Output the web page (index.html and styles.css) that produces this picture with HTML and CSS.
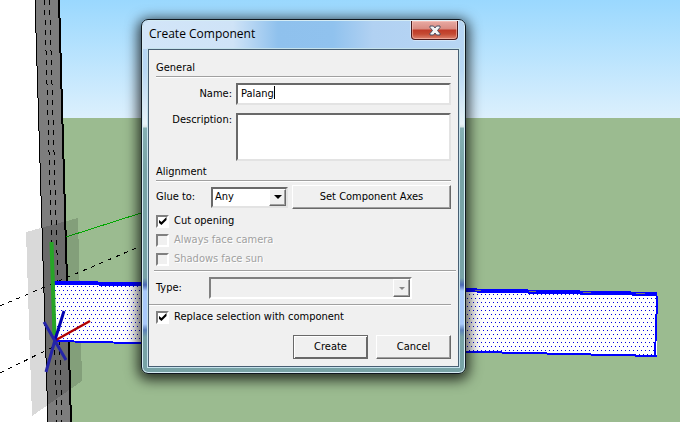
FILE: index.html
```html
<!DOCTYPE html>
<html lang="en">
<head>
<meta charset="utf-8">
<title>Create Component</title>
<link rel="stylesheet" href="styles.css">
</head>
<body>
<svg class="scene" viewBox="0 0 680 422" preserveAspectRatio="xMinYMin slice" aria-hidden="true">
  <defs>
    <linearGradient id="sky" x1="0" y1="0" x2="0" y2="1">
      <stop offset="0" stop-color="#9ad8fe"/>
      <stop offset="1" stop-color="#dcf0fd"/>
    </linearGradient>
    <pattern id="dots" x="1" y="294" width="4" height="8" patternUnits="userSpaceOnUse">
      <rect x="0" y="0" width="1" height="1" fill="#0000e0"/>
      <rect x="2" y="4" width="1" height="1" fill="#0000e0"/>
    </pattern>
  </defs>
  <g shape-rendering="crispEdges">
    <rect width="680" height="118" fill="url(#sky)"/>
    <rect y="118" width="680" height="304" fill="#9bbb90"/>
    <path d="M0 0H36L49 422H0Z" fill="#fff"/>
    <path d="M35 0H59L71 422H48Z" fill="#7d7d7d"/>
    <path d="M35 0L48 422" stroke="#000" fill="none"/>
    <path d="M59 0L71 422" stroke="#000" stroke-width="2" fill="none"/>
    <path d="M44.500 0L57 422M49.500 0L62 422" stroke="#000" stroke-dasharray="5 5" fill="none"/>
    <path d="M66 237L141 213" stroke="#00a800" fill="none"/>
    <path d="M0 306L141 246M0 373L55 346" stroke="#000" stroke-dasharray="4 5" fill="none"/>
    <path d="M26 232L78 218L82 381L32 416Z" fill="#000" opacity=".15"/>
    <path d="M55 283L657 293V356L55 341Z" fill="#fff"/>
    <path d="M55 283L657 293V356L55 341Z" fill="url(#dots)"/>
    <path d="M54 283L141 284L657 294" stroke="#00f" stroke-width="4" fill="none"/>
    <path d="M55 341L480 352L657 356" stroke="#00f" stroke-width="2" fill="none"/>
    <path d="M656 292L657 300L655 356" stroke="#00f" stroke-width="2" fill="none"/>
    <path d="M475 290.500h6M529 291.500h7M583 292.500h8M636 293.500h9" stroke="#777"/>
  </g>
  <path d="M51.500 242L54.500 335" stroke="#26a526" stroke-width="4"/>
  <path d="M56 340L90 321" stroke="#b00000" stroke-width="2.500"/>
  <path d="M55 340L64 311" stroke="#0000b0" stroke-width="3"/>
  <path d="M44 322L66 360M46 372L55 340" stroke="#2424a8" stroke-width="3"/>
</svg>

<main class="dialog" role="dialog" aria-labelledby="dialog-title">
  <header class="titlebar">
    <h1 class="title" id="dialog-title">Create Component</h1>
    <button class="close" type="button" aria-label="Close">
      <svg width="12" height="11" viewBox="0 0 12 11" aria-hidden="true">
        <path d="M1 1H4.500L6 3L7.500 1H11V2.500L8.500 5.500L11 8.500V10H7.500L6 8L4.500 10H1V8.500L3.500 5.500L1 2.500Z" fill="#f4f4f4" stroke="#4b4f62"/>
      </svg>
    </button>
  </header>

  <form class="client">
    <h2 class="section">General</h2>
    <div class="fields">
      <label for="name">Name:</label>
      <span class="entry"><input class="sunken" id="name" type="text" value="Palang"></span>
      <label for="description">Description:</label>
      <textarea class="sunken" id="description"></textarea>
    </div>

    <h2 class="section">Alignment</h2>
    <div class="glue">
      <label for="glue">Glue to:</label>
      <span class="combo sunken">
        <select id="glue"><option>Any</option></select>
        <span class="drop"></span>
      </span>
      <button class="button" type="button">Set Component Axes</button>
    </div>

    <div class="checks">
      <label class="check"><input type="checkbox" checked>Cut opening</label>
      <label class="check"><input type="checkbox" disabled>Always face camera</label>
      <label class="check"><input type="checkbox" disabled>Shadows face sun</label>
    </div>

    <div class="type">
      <label for="type">Type:</label>
      <span class="combo sunken disabled">
        <select id="type" disabled></select>
        <span class="drop"></span>
      </span>
    </div>

    <div class="footer">
      <label class="check"><input type="checkbox" checked>Replace selection with component</label>
      <div class="actions">
        <button class="button default" type="submit">Create</button>
        <button class="button" type="button">Cancel</button>
      </div>
    </div>
  </form>
</main>
</body>
</html>
```

FILE: styles.css
```css
* {
  box-sizing: border-box;
}

body {
  position: relative;
  min-height: 100vh;
  margin: 0;
  overflow: hidden;
  color: #000;
  font: 11px/14px "DejaVu Sans Condensed", "DejaVu Sans", sans-serif;
}

.scene {
  display: block;
  width: 100%;
  height: 100vh;
}

/* Floating window */
.dialog {
  position: absolute;
  top: 19px;
  left: 141px;
  width: 325px;
  padding: 0 6px 6px;
  border: 1px solid #101820;
  border-radius: 7px;
  background: linear-gradient(#b5d3f2 0, #b9d8f5 50px, #e8f2f8 104px, #d8e4e6 107px, #86b0b4 108px, #78a3a6 150px, #78a3a6 258px, #4c68b4 265px, #a9c9fa 271px, #a9c9fa 304px, #5c80b8 310px, #78a3a6 317px);
  box-shadow: inset 0 0 0 1px #d5ecf5, 0 3px 13px 3px rgba(0, 0, 0, .75);
}

.titlebar {
  display: flex;
  align-items: flex-start;
  justify-content: space-between;
  height: 28px;
  margin: 1px -5px 0;
  padding: 0 6px;
  border-radius: 6px 6px 0 0;
  background: linear-gradient(90deg, #d2e5f8 0, #cfe3f7 90px, #8fc1ed 135px, #90c2ee 190px, #b1d1f2 230px, #b8d6f4);
}

.title {
  margin: 0;
  font: 12px/26px "Open Sans", "Noto Sans", sans-serif;
}

.close {
  display: flex;
  align-items: center;
  justify-content: center;
  width: 47px;
  height: 19px;
  padding: 0;
  border: 1px solid #4c1a1c;
  border-top: 0;
  border-radius: 0 0 4px 4px;
  background: linear-gradient(#e8aba4 0, #d98a80 8px, #bf3a28 9px, #c44a33 13px, #dc8370);
  box-shadow: inset 0 0 0 1px rgba(255, 210, 200, .5), 0 0 0 1px rgba(255, 255, 255, .4);
}

.client {
  padding: 11px 7px 7px;
  border: 1px solid #485f73;
  background: #f0f0f0;
  box-shadow: 0 0 0 1px #c5e2ec;
}

.section {
  margin: 0;
  padding-bottom: 1px;
  border-bottom: 1px solid #a0a0a0;
  box-shadow: 0 1px #fff;
  font: inherit;
}

.fields {
  display: grid;
  grid-template-columns: 76px 1fr;
  column-gap: 4px;
  row-gap: 8px;
  margin: 6px 0 4px;
  text-align: right;
}

.fields label {
  padding-top: 4px;
}

.fields .sunken {
  display: block;
  width: 100%;
  height: 22px;
}

.fields textarea.sunken {
  height: 48px;
  resize: none;
}

.fields label[for="description"] {
  padding-top: 0;
}

.sunken {
  margin: 0;
  padding: 0 3px;
  border: 2px solid;
  border-color: #696969 #e3e3e3 #e3e3e3 #696969;
  border-radius: 0;
  outline: 0;
  background: #fff;
  color: #000;
  font: inherit;
}

.fields input.sunken {
  padding-bottom: 2px;
}

.entry {
  position: relative;
}

/* Text cursor after the typed name */
.entry::after {
  position: absolute;
  top: 3px;
  left: 38px;
  width: 1px;
  height: 13px;
  background: #000;
  content: "";
}

.glue {
  display: grid;
  grid-template-columns: 51px 77px 1fr;
  column-gap: 4px;
  align-items: center;
  margin-top: 4px;
}

.combo {
  position: relative;
  display: block;
  height: 21px;
  padding: 0;
}

.combo select {
  display: block;
  width: 100%;
  height: 17px;
  padding: 0 2px;
  border: 0;
  border-radius: 0;
  outline: 0;
  appearance: none;
  background: transparent;
  color: #000;
  font: inherit;
}

.drop {
  position: absolute;
  top: 0;
  right: 0;
  display: grid;
  place-items: center;
  width: 17px;
  height: 17px;
  border: 1px solid;
  border-color: #fff #696969 #696969 #fff;
  background: #f0f0f0;
  box-shadow: inset -1px -1px #a0a0a0;
  pointer-events: none;
}

.drop::after {
  border: 4px solid transparent;
  border-top-color: #000;
  border-bottom: 0;
  content: "";
}

.disabled {
  border-color: #808080 #fff #fff #808080;
  background: #f0f0f0;
}

.disabled .drop::after {
  border-width: 3px;
  border-bottom: 0;
  border-top-color: #888;
}

.button {
  height: 24px;
  padding: 0 0 1px;
  border: 1px solid;
  border-color: #fff #696969 #696969 #fff;
  background: #f0f0f0;
  box-shadow: inset -1px -1px #a0a0a0;
  color: #000;
  font: inherit;
}

.button.default {
  border-color: #696969;
  box-shadow: inset 1px 1px #fff, inset -1px -1px #696969;
}

.checks {
  display: grid;
  row-gap: 5px;
  margin: 0 -5px 0 -2px;
  padding: 5px 0 4px 2px;
  border-bottom: 1px solid #a0a0a0;
  box-shadow: 0 1px #fff;
}

.check {
  display: flex;
  align-items: center;
  gap: 5px;
}

.check input {
  display: grid;
  place-items: center;
  width: 13px;
  height: 13px;
  margin: 0;
  border: 2px solid;
  border-color: #808080 #fff #fff #808080;
  appearance: none;
  background: #fff;
}

.check input:checked::after {
  width: 8px;
  height: 8px;
  background: #000;
  clip-path: polygon(0 30%, 37% 62%, 100% 0, 100% 38%, 37% 100%, 0 68%);
  content: "";
}

.check input:disabled {
  background: #f0f0f0;
}

.check:has(:disabled) {
  color: #a0a0a0;
  text-shadow: 1px 1px #fff;
}

.type {
  display: grid;
  grid-template-columns: 53px 203px;
  align-items: center;
  padding: 6px 0 5px;
}

.type .combo {
  height: 22px;
}

.type select,
.type .drop {
  height: 18px;
}

.footer {
  margin-left: -7px;
  padding: 5px 0 0 7px;
  border-top: 1px solid #a0a0a0;
  box-shadow: inset 0 1px #fff;
}

.actions {
  display: flex;
  justify-content: flex-end;
  gap: 8px;
  margin-top: 11px;
}

.actions .button {
  width: 75px;
}
```
